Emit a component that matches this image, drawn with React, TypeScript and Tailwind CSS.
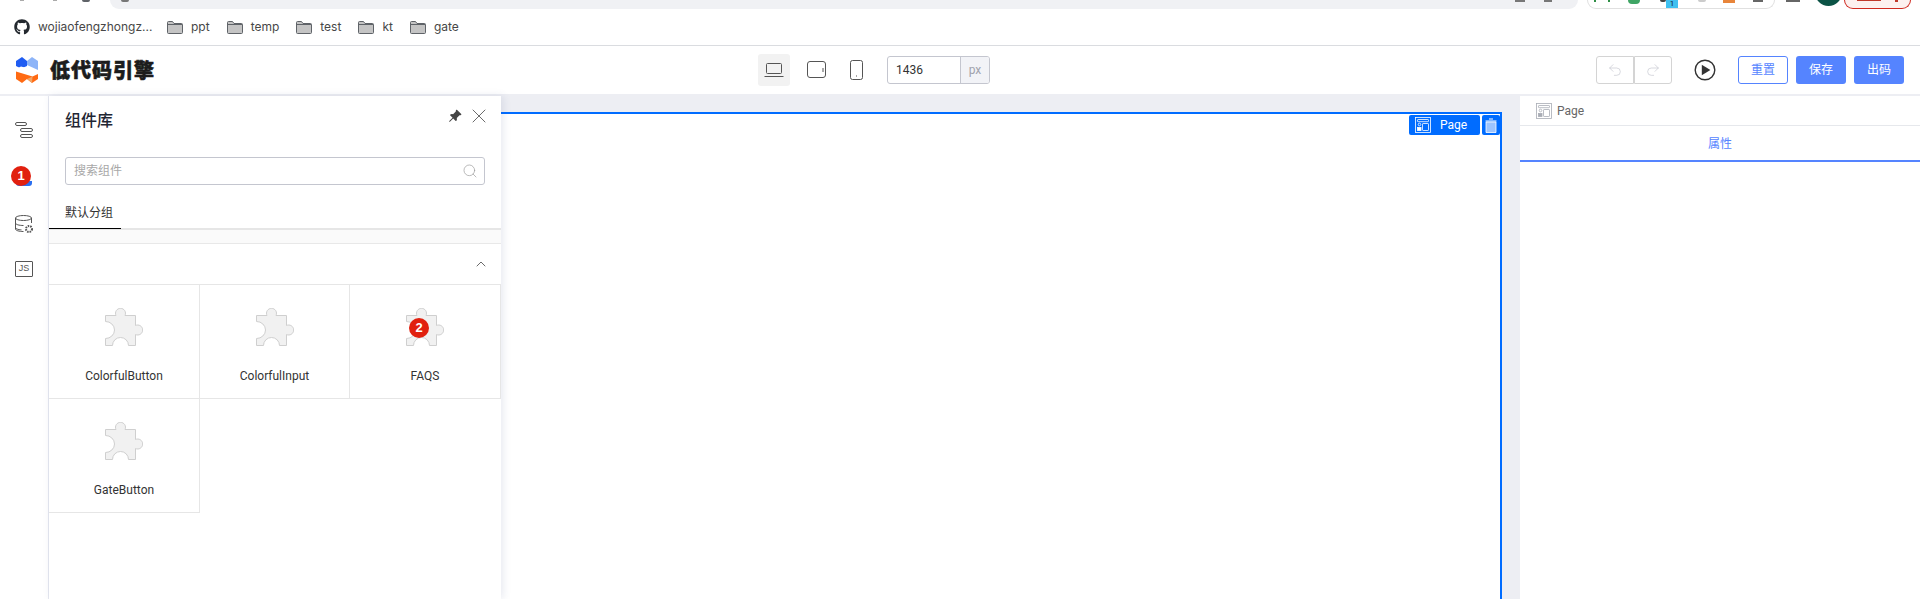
import { Search, X, Undo2, Redo2, ChevronUp } from "lucide-react";
import { FaGithub } from "react-icons/fa";
import { BsPinAngleFill } from "react-icons/bs";

const bookmarks = ["ppt", "temp", "test", "kt", "gate"];
const components = ["ColorfulButton", "ColorfulInput", "FAQS", "GateButton"];

const FolderIcon = () => (
  <svg width="16" height="13" viewBox="0 0 16 13" className="shrink-0">
    <path d="M0.5 1.5a1 1 0 0 1 1-1h4l1.5 2h7.5a1 1 0 0 1 1 1v8a1 1 0 0 1-1 1h-13a1 1 0 0 1-1-1z" fill="#c4c4c4" stroke="#5f6368" />
    <path d="M1 3.5h14" stroke="#5f6368" />
  </svg>
);

const PuzzleIcon = () => (
  <svg width="38" height="38" viewBox="-0.5 -0.5 38 38">
    <path
      d="M0 7H10.5A5 5 0 1 1 19.5 7H30V17A5 5 0 1 1 30 26V37H23A8 8 0 0 0 7 37H0V30A9 8.5 0 0 0 0 13Z"
      fill="#f1f1f1"
      stroke="#cfcfcf"
    />
  </svg>
);

const PageIcon = ({ color, size }: { color: string; size: number }) => (
  <svg width={size} height={size} viewBox="0 0 16 16" fill="none" stroke={color} strokeWidth="0.8">
    <rect x="0.5" y="0.5" width="15" height="15" />
    <rect x="2.5" y="2.5" width="11" height="2.2" rx="0.6" />
    <rect x="7.5" y="6.5" width="6" height="7" rx="0.6" />
    <circle cx="4.5" cy="7.5" r="1.3" />
    <rect x="2.5" y="10.5" width="3.5" height="3" fill={color} />
  </svg>
);

const Badge = ({ n, className }: { n: number; className: string }) => (
  <div
    className={`absolute flex h-5 w-5 items-center justify-center rounded-full bg-[#e1200f] font-['Liberation_Sans',sans-serif] text-[13px] font-bold text-white ${className}`}
  >
    {n}
  </div>
);

const BrowserChrome = () => (
  <div>
    <div className="flex h-[9px] items-end overflow-hidden bg-white">
      <div className="flex h-[9px] w-[110px] shrink-0 items-start">
        <div className="ml-[20px] mt-0 h-[1px] w-[4px] bg-[#aaa]" />
        <div className="ml-[29px] h-[1px] w-[4px] bg-[#aaa]" />
        <div className="ml-[25px] h-[2px] w-[8px] rounded-b-full bg-[#5f6368]" />
      </div>
      <div className="flex h-[9px] w-[1468px] shrink-0 items-start rounded-b-[12px] bg-[#f0f1f4]">
        <div className="ml-[11px] h-[2px] w-[8px] rounded-b-full bg-[#777]" />
        <div className="ml-[1386px] h-[2px] w-[10px] bg-[#777]" />
        <div className="ml-[19px] h-[2px] w-[8px] bg-[#777]" />
      </div>
      <div className="ml-[9px] flex h-[9px] w-[188px] shrink-0 items-start rounded-b-[12px] border-x border-b border-[#e0e0e0]">
        <div className="ml-[6px] h-[2px] w-[16px] border-x-2 border-[#2f8f46]" />
        <div className="ml-[18px] h-[4px] w-[12px] rounded-b-full bg-[#3fa565]" />
        <div className="ml-[20px] h-[2px] w-[6px] rounded-b-full bg-[#444]" />
        <div className="flex h-[8px] w-[12px] items-center justify-center bg-[#3fc0f0] text-[8px] leading-none text-[#123]">1</div>
        <div className="ml-[20px] h-[2px] w-[8px] rounded-b-full bg-[#ccc]" />
        <div className="ml-[17px] h-[3px] w-[12px] bg-[#e8853a]" />
        <div className="ml-[18px] h-[2px] w-[10px] bg-[#666]" />
      </div>
      <div className="ml-[11px] h-[9px] w-[14px] shrink-0 self-start">
        <div className="h-[2px] bg-[#666]" />
      </div>
      <div className="mb-[3px] ml-[15px] h-[27px] w-[27px] shrink-0 rounded-full bg-[#0b5345]" />
      <div className="ml-[2px] flex h-[9px] w-[67px] shrink-0 items-start justify-center gap-[14px] rounded-b-[14px] border-x border-b border-[#cf2a20] bg-[#fdf1ef]">
        <div className="h-[1px] w-[24px] bg-[#c0392b]" />
        <div className="h-[2px] w-[3px] bg-[#c0392b]" />
      </div>
    </div>
    <div className="flex h-[37px] items-center border-b border-[#dadce0] bg-white pl-[14px] font-[Inter,sans-serif] text-[12px] text-[#474747]">
      <FaGithub size={16} className="text-[#24292f]" />
      <span className="ml-[8px] w-[129px]">wojiaofengzhongz...</span>
      {bookmarks.map((b) => (
        <div key={b} className="mr-[17px] flex items-center gap-[8px]">
          <FolderIcon />
          <span>{b}</span>
        </div>
      ))}
    </div>
  </div>
);

const Logo = () => (
  <svg width="22" height="26" viewBox="0 0 22 26" className="shrink-0">
    <path d="M0 4L6 0L11 4V9L5 11.5L0 9Z" fill="#1f5cf2" />
    <path d="M11 4L16 0L22 4V13L11 8Z" fill="#8db4f8" />
    <path d="M0 12L5 9.5L22 14V17.5L16.5 20L0 15Z" fill="#fff" />
    <path d="M0 14.5L16.5 19.5L22 17V22L16 26L11 22L6 26L0 22Z" fill="#ff6a13" />
    <path d="M11 22L16.5 19.5L16 26Z" fill="#f3a565" />
  </svg>
);

const Toolbar = () => (
  <div className="flex h-[48px] items-center bg-white">
    <div className="ml-[16px]">
      <Logo />
    </div>
    <span className="ml-[12px] w-[104px] whitespace-nowrap font-['Noto_Sans_CJK_SC',sans-serif] text-[20px] font-black leading-none tracking-[1px] text-[#1c1c1c] [-webkit-text-stroke:0.6px_#1c1c1c]">
      低代码引擎
    </span>
    <div className="ml-[604px] flex h-[32px] w-[32px] items-center justify-center rounded-[3px] bg-[#f2f2f2]">
      <svg width="20" height="16" viewBox="0 0 20 16" fill="none" stroke="#555">
        <rect x="2.5" y="1.5" width="15" height="10" rx="1" />
        <path d="M0.5 14.5h19" />
      </svg>
    </div>
    <svg width="20" height="18" viewBox="0 0 20 18" fill="none" stroke="#555" className="ml-[17px]">
      <rect x="0.5" y="0.5" width="18" height="16" rx="2.5" />
      <path d="M16 7v4" />
    </svg>
    <svg width="13" height="20" viewBox="0 0 13 20" fill="none" stroke="#555" className="ml-[23px]">
      <rect x="0.5" y="0.5" width="12" height="19" rx="2" />
      <path d="M6 16h1" />
    </svg>
    <div className="ml-[24px] flex h-[28px] w-[103px] overflow-hidden rounded-[3px] border border-[#c4c6cf] text-[12px]">
      <div className="flex w-[72px] items-center pl-[8px] text-[#333]">1436</div>
      <div className="flex flex-1 items-center justify-center border-l border-[#c4c6cf] bg-[#f2f3f7] text-[#a0a2ad]">px</div>
    </div>
    <div className="ml-[606px] flex h-[28px] w-[38px] items-center justify-center rounded-l-[3px] border border-[#d4d4d4]">
      <Undo2 size={16} strokeWidth={1} className="text-[#c4c6cf]" />
    </div>
    <div className="flex h-[28px] w-[38px] items-center justify-center rounded-r-[3px] border border-[#d4d4d4]">
      <Redo2 size={16} strokeWidth={1} className="text-[#c4c6cf]" />
    </div>
    <svg width="22" height="22" viewBox="0 0 22 22" className="ml-[22px]">
      <circle cx="11" cy="11" r="9.8" fill="none" stroke="#333" strokeWidth="1.4" />
      <path d="M7.8 5.8L16.4 11L7.8 16.2Z" fill="#333" />
    </svg>
    <button className="ml-[22px] h-[28px] w-[50px] rounded-[3px] border border-[#5584ff] text-[12px] text-[#5584ff]">重置</button>
    <button className="ml-[8px] h-[28px] w-[50px] rounded-[3px] bg-[#5584ff] text-[12px] text-white">保存</button>
    <button className="ml-[8px] h-[28px] w-[50px] rounded-[3px] bg-[#5584ff] text-[12px] text-white">出码</button>
  </div>
);

const Rail = () => (
  <div className="relative w-[49px] shrink-0 border-r border-[#e6e8f0] bg-white">
    <svg width="18" height="17" viewBox="0 0 18 17" fill="none" stroke="#555" className="absolute left-[15px] top-[26px]">
      <rect x="0.5" y="0.5" width="11" height="3" rx="1.5" />
      <rect x="5.5" y="6.5" width="12" height="3" rx="1.5" />
      <rect x="5.5" y="12.5" width="12" height="3" rx="1.5" />
    </svg>
    <div className="absolute left-[16px] top-[85px] h-[5px] w-[16px] rounded-b-[3px] bg-[#2a6ff0]" />
    <Badge n={1} className="left-[11px] top-[70px]" />
    <svg width="19" height="19" viewBox="0 0 19 19" fill="none" stroke="#555" className="absolute left-[15px] top-[119px]">
      <ellipse cx="8.5" cy="3" rx="8" ry="2.5" />
      <path d="M0.5 3v11c0 1.5 3.5 2.5 8 2.5M0.5 8c0 1.5 3.5 2.5 8 2.5M16.5 3v5M0.5 12.5c0 1.2 2.5 2.2 6 2.4" />
      <circle cx="14" cy="14" r="3" strokeWidth="2" strokeDasharray="1.5 1" />
    </svg>
    <div className="absolute left-[15px] top-[165px] flex h-[16px] w-[18px] items-center justify-center rounded-[1px] border border-[#555] font-['Liberation_Sans',sans-serif] text-[9px] text-[#555]">
      JS
    </div>
  </div>
);

const LibraryPanel = () => (
  <div className="relative z-10 flex w-[452px] shrink-0 flex-col bg-white shadow-[2px_0_8px_rgba(60,70,130,0.12)]">
    <div className="flex h-[61px] items-start justify-between pl-[16px] pr-[10px]">
      <span className="mt-[14px] text-[16px] font-medium leading-[22px] text-[#1f2633]">组件库</span>
      <div className="mt-[8px] flex items-center gap-[5px]">
        <BsPinAngleFill size={14} className="text-[#444]" />
        <X size={24} strokeWidth={0.8} className="text-[#444]" />
      </div>
    </div>
    <div className="mx-[16px] flex h-[28px] items-center justify-between rounded-[3px] border border-[#c4c6cf] pl-[8px] pr-[6px]">
      <span className="text-[12px] text-[#a8a8a8]">搜索组件</span>
      <Search size={16} strokeWidth={1} className="text-[#999]" />
    </div>
    <div className="mt-[13px] flex h-[32px] border-b-2 border-[#e6e6e6]">
      <div className="-mb-[2px] h-[31px] w-[72px] border-b border-black pl-[16px] pt-[5px] text-[12px] leading-[20px] text-[#333]">默认分组</div>
    </div>
    <div className="h-[14px] border-b border-[#e8e8e8] bg-[#fafafa]" />
    <div className="flex h-[41px] items-center justify-end border-b border-[#e6e6e6] pr-[12px]">
      <ChevronUp size={16} strokeWidth={1.2} className="text-[#444]" />
    </div>
    <div className="grid grid-cols-[151px_150px_151px]">
      {components.map((name) => (
        <div key={name} className="relative flex h-[114px] flex-col items-center border-r border-b border-[#e6e6e6] pt-[23px]">
          <PuzzleIcon />
          <span className="mt-[21px] font-[Roboto,sans-serif] text-[12px] leading-[18px] text-[#333]">{name}</span>
          {name === "FAQS" && <Badge n={2} className="left-[59px] top-[33px]" />}
        </div>
      ))}
    </div>
  </div>
);

const Canvas = () => (
  <div className="flex min-w-0 flex-1 flex-col pt-[16px] pr-[18px]">
    <div className="relative flex-1 border-t-2 border-r-2 border-[#006cff] bg-white">
      <div className="absolute right-[20px] top-[1px] flex h-[20px] w-[71px] items-center rounded-[2px] bg-[#006cff] pl-[6px] text-[12px] text-white">
        <PageIcon color="#fff" size={16} />
        <span className="ml-[9px]">Page</span>
      </div>
      <div className="absolute right-0 top-[1px] flex h-[20px] w-[18px] items-center justify-center rounded-[2px] bg-[#006cff]">
        <svg width="12" height="15" viewBox="0 0 12 15">
          <path d="M4 1h4M0.5 3h11" stroke="#fff" fill="none" />
          <path d="M1 4h10v10.5H1z" fill="#9cc4ff" stroke="#fff" strokeWidth="0.8" />
        </svg>
      </div>
    </div>
  </div>
);

const SettingsPanel = () => (
  <div className="w-[400px] shrink-0 bg-white">
    <div className="flex h-[30px] items-center border-b border-[#e6e8ec] pl-[16px] text-[12px] text-[#666]">
      <PageIcon color="#a8acb5" size={16} />
      <span className="ml-[5px]">Page</span>
    </div>
    <div className="flex h-[36px] items-center justify-center border-b-2 border-[#5584ff] pt-[2px] text-[12px] text-[#5584ff]">属性</div>
  </div>
);

export default function App() {
  return (
    <div className="flex h-[599px] w-[1920px] flex-col overflow-hidden bg-white font-[Roboto,'Noto_Sans_CJK_SC',sans-serif]">
      <BrowserChrome />
      <Toolbar />
      <div className="flex min-h-0 flex-1 bg-[#edeef3] pt-[2px]">
        <Rail />
        <LibraryPanel />
        <Canvas />
        <SettingsPanel />
      </div>
    </div>
  );
}
